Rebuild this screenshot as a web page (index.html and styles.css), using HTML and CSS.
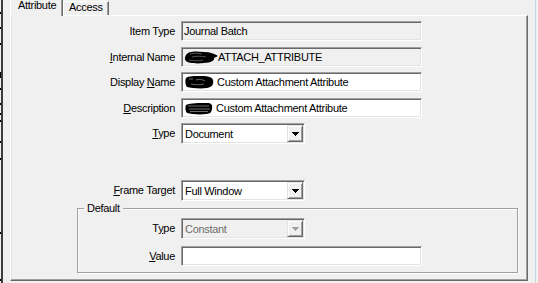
FILE: index.html
```html
<!DOCTYPE html>
<html>
<head>
<meta charset="utf-8">
<link rel="stylesheet" href="styles.css">
</head>
<body>
<div class="window">
  <div class="ledge">
    <svg width="3" height="283" viewBox="0 0 3 283" shape-rendering="crispEdges">
      <rect x="1" y="0" width="2" height="283" fill="#3c3c3c"/>
      <g fill="#000">
        <rect x="0" y="12" width="1" height="2"/>
        <rect x="0" y="27" width="1" height="2"/>
        <rect x="0" y="43" width="1" height="2"/>
        <rect x="0" y="72" width="1" height="6"/>
        <rect x="0" y="88" width="1" height="2"/>
        <rect x="0" y="103" width="1" height="2"/>
        <rect x="0" y="113" width="1" height="2"/>
        <rect x="0" y="120" width="1" height="2"/>
        <rect x="0" y="141" width="1" height="2"/>
        <rect x="0" y="158" width="1" height="2"/>
        <rect x="0" y="232" width="1" height="2"/>
        <rect x="0" y="279" width="1" height="2"/>
      </g>
    </svg>
  </div>
  <div class="tabctl">
    <div class="tabs">
      <div class="tab active">Attribute</div>
      <div class="tab">Access</div>
    </div>
    <div class="panel">
      <div class="form">
        <div class="lbl"><span>Item Type</span></div>
        <div class="field ro">Journal Batch</div>

        <div class="lbl"><span><u>I</u>nternal Name</span></div>
        <div class="field ro">
          <svg class="blob b1" width="35" height="14" viewBox="0 0 35 14">
            <path d="M2 5 C4 1 12 1 20 2 C26 2 31 4 34 6 L30 8 C31 10 27 13 20 13 C12 14 4 13 2 11 C0 9 1 7 2 5 Z" fill="#000"/>
            <path d="M6 4 C10 3 14 3 18 4 M8 7 C12 6 17 6 22 7 M5 10 C9 11 14 11 19 10" stroke="#666" stroke-width="0.8" fill="none"/>
          </svg><span>ATTACH_ATTRIBUTE</span>
        </div>

        <div class="lbl"><span>Display <u>N</u>ame</span></div>
        <div class="field">
          <svg class="blob b2" width="29" height="14" viewBox="0 0 29 14">
            <path d="M1 3 C3 1 10 1 17 1 C23 1 27 2 28 5 C29 9 27 12 22 13 C15 14 6 13 2 12 C0 10 0 5 1 3 Z" fill="#000"/>
            <path d="M4 4 L8 4 M11 5 C14 4 17 4 20 6 M6 9 C10 10 15 10 19 9" stroke="#777" stroke-width="0.9" fill="none"/>
          </svg><span>Custom Attachment Attribute</span>
        </div>

        <div class="lbl"><span><u>D</u>escription</span></div>
        <div class="field">
          <svg class="blob b3" width="28" height="13" viewBox="0 0 28 13">
            <path d="M1 3 C6 1 14 1 22 1 C26 1 28 3 27 6 C27 9 26 12 21 12 C14 13 6 12 2 11 C0 9 0 5 1 3 Z" fill="#000"/>
            <path d="M3 4 L24 4 M4 7 L25 7 M5 9.5 L23 9.5" stroke="#888" stroke-width="0.8" fill="none"/>
          </svg><span>Custom Attachment Attribute</span>
        </div>

        <div class="lbl"><span><u>T</u>ype</span></div>
        <div class="combo">
          <div class="val">Document</div>
          <div class="btn"><svg width="7" height="4" viewBox="0 0 7 4" shape-rendering="crispEdges"><path d="M0 0H7V1H6V2H5V3H4V4H3V3H2V2H1V1H0Z" fill="#000"/></svg></div>
        </div>

        <div class="lbl"><span><u>F</u>rame Target</span></div>
        <div class="combo">
          <div class="val">Full Window</div>
          <div class="btn"><svg width="7" height="4" viewBox="0 0 7 4" shape-rendering="crispEdges"><path d="M0 0H7V1H6V2H5V3H4V4H3V3H2V2H1V1H0Z" fill="#000"/></svg></div>
        </div>
      </div>

      <fieldset class="group">
        <legend>Default</legend>
        <div class="gform">
          <div class="lbl"><span>T<u>y</u>pe</span></div>
          <div class="combo disabled">
            <div class="val">Constant</div>
            <div class="btn"><svg width="7" height="4" viewBox="0 0 7 4" shape-rendering="crispEdges"><path d="M0 0H7V1H6V2H5V3H4V4H3V3H2V2H1V1H0Z" fill="#a0a0a0"/></svg></div>
          </div>
          <div class="lbl"><span><u>V</u>alue</span></div>
          <div class="field"></div>
        </div>
      </fieldset>
    </div>
  </div>
  <div class="redge"></div>
</div>
</body>
</html>
```

FILE: styles.css
```css
html, body {
  margin: 0;
  padding: 0;
  background: #f0f0f0;
  width: 538px;
  height: 283px;
  overflow: hidden;
}

body {
  font-family: "Liberation Sans", Arial, sans-serif;
  font-size: 11px;
  letter-spacing: -0.3px;
  color: #000;
}

.window {
  display: flex;
  height: 283px;
}

.ledge {
  width: 3px;
  height: 283px;
  flex: none;
}
.ledge svg { display: block; }

.tabctl {
  margin-left: 7px;
  width: 518px;
  height: 281px;
  display: flex;
  flex-direction: column;
  flex: none;
}

.tabs {
  height: 15px;
  display: flex;
  align-items: flex-end;
  flex: none;
}

.tab {
  box-sizing: border-box;
  background: #f0f0f0;
  white-space: nowrap;
}

.tab.active {
  width: 53px;
  height: 17px;
  margin-bottom: -1px;
  position: relative;
  z-index: 1;
  border-left: 1px solid #fff;
  border-right: 1px solid #696969;
  box-shadow: inset -1px 0 #a0a0a0;
  padding-left: 7px;
  line-height: 13px;
}

.tab:not(.active) {
  width: 46px;
  height: 14px;
  border-top: 1px solid #fff;
  border-left: 1px solid #fff;
  border-right: 1px solid #696969;
  box-shadow: inset -1px 0 #a0a0a0;
  padding-left: 5px;
  line-height: 11px;
}

.panel {
  flex: 1;
  box-sizing: border-box;
  border-top: 1px solid #fff;
  border-left: 1px solid #fff;
  border-right: 1px solid #696969;
  border-bottom: 1px solid #696969;
  box-shadow: inset -1px -1px #a0a0a0, inset 1px 0 #e3e3e3;
  padding-top: 5px;
}

.form {
  display: grid;
  grid-template-columns: 164px auto;
  grid-template-rows: 26px 25px 26px 25px 57px 22px;
  column-gap: 6px;
  align-items: start;
  justify-items: start;
}

.lbl {
  justify-self: stretch;
  height: 20px;
  display: flex;
  align-items: center;
  justify-content: flex-end;
  white-space: nowrap;
}

u {
  text-underline-offset: 1px;
}

.field {
  box-sizing: border-box;
  width: 241px;
  height: 20px;
  border: 1px solid;
  border-color: #a0a0a0 #fff #fff #a0a0a0;
  box-shadow: inset 1px 1px #696969, inset -1px -1px #e3e3e3;
  background: #fff;
  padding-left: 2px;
  display: flex;
  align-items: center;
  white-space: nowrap;
  overflow: hidden;
}

.field.ro {
  background: #f0f0f0;
}

.blob {
  flex: none;
  display: block;
}
.b1 { margin-left: 0; margin-right: -1px; }
.b2 { margin-left: 1px; margin-right: 3px; }
.b3 { margin-left: 1px; margin-right: 3px; }

.combo {
  box-sizing: border-box;
  width: 124px;
  height: 21px;
  border: 1px solid;
  border-color: #a0a0a0 #fff #fff #a0a0a0;
  box-shadow: inset 1px 1px #696969, inset -1px -1px #e3e3e3;
  background: #fff;
  display: flex;
  align-items: center;
}

.combo .val {
  flex: 1;
  padding-left: 3px;
  white-space: nowrap;
}

.combo .btn {
  box-sizing: border-box;
  width: 16px;
  height: 17px;
  margin-right: 1px;
  border: 1px solid;
  border-color: #e3e3e3 #696969 #696969 #e3e3e3;
  box-shadow: inset 1px 1px #fff, inset -1px -1px #a0a0a0;
  background: #f0f0f0;
  display: flex;
  align-items: center;
  justify-content: center;
}
.combo .btn svg { display: block; }

.combo.disabled {
  background: #f0f0f0;
  color: #6d6d6d;
}

.group {
  box-sizing: border-box;
  width: 441px;
  margin: 0 0 0 66px;
  padding: 4px 0 6px 0;
  border: 1px solid #a0a0a0;
  box-shadow: inset 1px 1px #fff, 1px 1px #fff;
  min-inline-size: 0;
}

.group legend {
  margin-left: 6px;
  padding: 0 3px;
  line-height: 12px;
  background: #f0f0f0;
}

.gform {
  display: grid;
  grid-template-columns: 97px auto;
  grid-template-rows: 28px 20px;
  column-gap: 6px;
  align-items: start;
  justify-items: start;
}

.redge {
  margin-left: 7px;
  width: 1px;
  height: 283px;
  background: #c8d6e4;
  flex: none;
}
```
